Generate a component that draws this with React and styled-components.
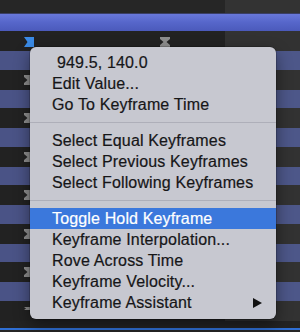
import React from "react";
import styled, { createGlobalStyle, css } from "styled-components";

const GlobalStyle = createGlobalStyle`
  html, body {
    margin: 0;
    padding: 0;
    background: #232323;
  }
  * { box-sizing: border-box; }
`;

const Stage = styled.div`
  position: relative;
  width: 300px;
  height: 332px;
  overflow: hidden;
  display: flex;
  flex-direction: column;
  background: #232323;
  font-family: "Liberation Sans", Arial, sans-serif;
`;

const Band = styled.div`
  display: flex;
  height: ${(p) => p.$h}px;
  flex: none;
`;

const LeftCell = styled.div`
  position: relative;
  width: 225px;
  height: 100%;
  background: ${(p) => p.$bg};
`;

const RightCell = styled.div`
  flex: 1;
  height: 100%;
  background: ${(p) => p.$bg};
`;

const SelectedBar = styled.div`
  height: 18px;
  flex: none;
  background: linear-gradient(#6878da, #5666ca 50%, #4b5abb);
  border-top: 1px solid #3a3f66;
`;

const TONES = {
  dark: { left: "#222222", right: "#323232" },
  blue: { left: "#4a5386", right: "#4d5789" },
};

const TrackRow = styled.div`
  display: flex;
  flex: none;
  height: ${(p) => p.$h}px;
  box-shadow: inset 0 -1px 0 rgba(0, 0, 0, 0.18);
`;

const Marker = styled.svg`
  position: absolute;
  left: ${(p) => p.$x}px;
  top: ${(p) => p.$y}px;
`;

const BottomFill = styled.div`
  flex: none;
  height: 7.5px;
  background: #232323;
`;

const PlayLine = styled.div`
  flex: none;
  height: 2px;
  background: #2f6fd4;
`;

const Rest = styled.div`
  flex: 1;
  background: #262626;
`;

const Menu = styled.div`
  position: absolute;
  left: 30px;
  top: 47px;
  width: 246px;
  padding: 5px 0 6px;
  background: #c7c8d0;
  border-radius: 6px;
  box-shadow: 0 0 0 0.5px rgba(0, 0, 0, 0.35), 0 6px 16px rgba(0, 0, 0, 0.45);
  display: flex;
  flex-direction: column;
`;

const Item = styled.div`
  display: flex;
  align-items: center;
  justify-content: space-between;
  height: 21px;
  line-height: 21px;
  padding: 0 14px 0 ${(p) => (p.$indent ? 27 : 22)}px;
  font-size: 16px;
  letter-spacing: 0.15px;
  color: #161618;
  -webkit-text-stroke: 0.2px currentColor;
  white-space: nowrap;
  ${(p) =>
    p.$active &&
    css`
      background: #3b78dc;
      color: #ffffff;
    `}
`;

const Separator = styled.div`
  height: 15px;
  display: flex;
  align-items: center;
  &::after {
    content: "";
    display: block;
    width: 100%;
    height: 1px;
    background: #aeafb9;
  }
`;

const Arrow = styled.span`
  width: 0;
  height: 0;
  border-top: 5px solid transparent;
  border-bottom: 5px solid transparent;
  border-left: 9px solid #111;
`;

const FlagKey = ({ x, y, color }) => (
  <Marker $x={x} $y={y} width="10" height="10" viewBox="0 0 10 10">
    <polygon points="0,0 10,0 10,10 0,10 3.5,5" fill={color} />
  </Marker>
);

const HoldKey = ({ x, y }) => (
  <Marker $x={x} $y={y} width="10" height="10" viewBox="0 0 10 10">
    <polygon points="0,0 10,0 10,2 6.5,5 10,8 10,10 0,10 0,8 3.5,5 0,2" fill="#8e8e8e" />
  </Marker>
);

const StubKey = ({ x, y }) => (
  <Marker $x={x} $y={y} width="10" height="4" viewBox="0 0 10 4">
    <polygon points="0,0 10,0 10,3 0,3 2,1.5" fill="#8a8a8a" />
  </Marker>
);

const rows = [];
for (let i = 0; i < 8; i++) {
  rows.push({ tone: "dark", h: 20, key: i });
  if (i < 7) rows.push({ tone: "blue", h: 18.5, key: `b${i}` });
}

const items = [
  { label: "949.5, 140.0", indent: true },
  { label: "Edit Value..." },
  { label: "Go To Keyframe Time" },
  "sep",
  { label: "Select Equal Keyframes" },
  { label: "Select Previous Keyframes" },
  { label: "Select Following Keyframes" },
  "sep",
  { label: "Toggle Hold Keyframe", active: true },
  { label: "Keyframe Interpolation..." },
  { label: "Rove Across Time" },
  { label: "Keyframe Velocity..." },
  { label: "Keyframe Assistant", sub: true },
];

export default function App() {
  let darkIndex = -1;
  return (
    <>
      <GlobalStyle />
      <Stage>
        <Band $h={13}>
          <LeftCell $bg="#262626" />
          <RightCell $bg="#333333" />
        </Band>
        <SelectedBar />
        {rows.map((r) => {
          const t = TONES[r.tone];
          if (r.tone === "dark") darkIndex += 1;
          const di = darkIndex;
          return (
            <TrackRow key={r.key} $h={r.h}>
              <LeftCell $bg={t.left}>
                {r.tone === "dark" && di === 0 && (
                  <>
                    <FlagKey x={24} y={6} color="#3b8be6" />
                    <HoldKey x={160} y={6} />
                  </>
                )}
                {r.tone === "dark" && di > 0 && di < 7 && <HoldKey x={24} y={5} />}
                {r.tone === "dark" && di === 7 && <StubKey x={24} y={6} />}
              </LeftCell>
              <RightCell $bg={t.right} />
            </TrackRow>
          );
        })}
        <BottomFill />
        <PlayLine />
        <Rest />
        <Menu>
          {items.map((it, i) =>
            it === "sep" ? (
              <Separator key={i} />
            ) : (
              <Item key={i} $indent={it.indent} $active={it.active}>
                <span>{it.label}</span>
                {it.sub && <Arrow />}
              </Item>
            )
          )}
        </Menu>
      </Stage>
    </>
  );
}
